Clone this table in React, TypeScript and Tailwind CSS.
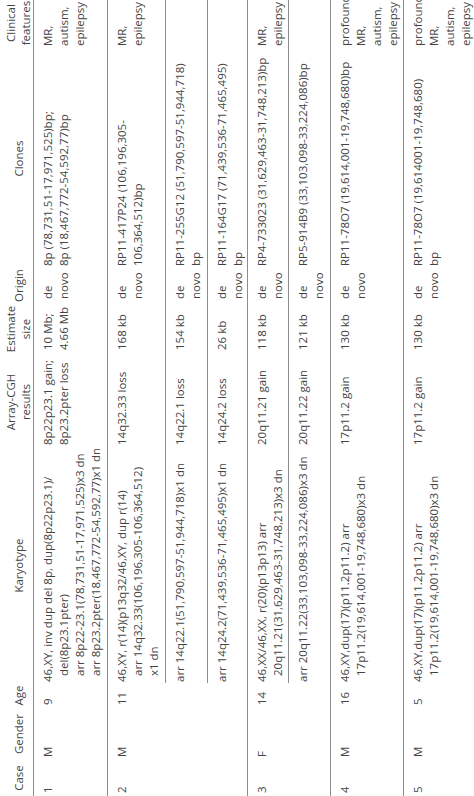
import React from 'react';

type Row = {
  caseNo?: string;
  gender?: string;
  age?: string;
  span?: 'row-span-2' | 'row-span-3';
  karyotype: string[];
  array: string[];
  size: string[];
  origin: string[];
  clones: string[];
  clinical: string[];
};

const rows: Row[] = [
  {
    caseNo: '1',
    gender: 'M',
    age: '9',
    karyotype: [
      '46,XY, inv dup del 8p, dup(8p22p23.1)/',
      'del(8p23.1pter)',
      'arr 8p22-23.1(78,731,51-17,971,525)x3 dn',
      'arr 8p23.2pter(18,467,772-54,592,77)x1 dn',
    ],
    array: ['8p22p23.1 gain;', '8p23.2pter loss'],
    size: ['10 Mb;', '4.66 Mb'],
    origin: ['de', 'novo'],
    clones: ['8p (78,731,51-17,971,525)bp;', '8p (18,467,772-54,592,77)bp'],
    clinical: ['MR,', 'autism,', 'epilepsy'],
  },
  {
    caseNo: '2',
    gender: 'M',
    age: '11',
    span: 'row-span-3',
    karyotype: ['46,XY, r(14)(p13q32/46,XY, dup r(14)', 'arr 14q32.33(106,196,305-106,364,512)', 'x1 dn'],
    array: ['14q32.33 loss'],
    size: ['168 kb'],
    origin: ['de', 'novo'],
    clones: ['RP11-417P24 (106,196,305-', '106,364,512)bp'],
    clinical: ['MR,', 'epilepsy'],
  },
  {
    karyotype: ['arr 14q22.1(51,790,597-51,944,718)x1 dn'],
    array: ['14q22.1 loss'],
    size: ['154 kb'],
    origin: ['de', 'novo'],
    clones: ['RP11-255G12 (51,790,597-51,944,718)', 'bp'],
    clinical: [],
  },
  {
    karyotype: ['arr 14q24.2(71,439,536-71,465,495)x1 dn'],
    array: ['14q24.2 loss'],
    size: ['26 kb'],
    origin: ['de', 'novo'],
    clones: ['RP11-164G17 (71,439,536-71,465,495)', 'bp'],
    clinical: [],
  },
  {
    caseNo: '3',
    gender: 'F',
    age: '14',
    span: 'row-span-2',
    karyotype: ['46,XX/46,XX, r(20)(p13p13) arr', '20q11.21(31,629,463-31,748,213)x3 dn'],
    array: ['20q11.21 gain'],
    size: ['118 kb'],
    origin: ['de', 'novo'],
    clones: ['RP4-733023 (31,629,463-31,748,213)bp'],
    clinical: ['MR,', 'epilepsy'],
  },
  {
    karyotype: ['arr 20q11.22(33,103,098-33,224,086)x3 dn'],
    array: ['20q11.22 gain'],
    size: ['121 kb'],
    origin: ['de', 'novo'],
    clones: ['RP5-914B9 (33,103,098-33,224,086)bp'],
    clinical: [],
  },
  {
    caseNo: '4',
    gender: 'M',
    age: '16',
    karyotype: ['46,XY,dup(17)(p11.2p11.2) arr', '17p11.2(19,614,001-19,748,680)x3 dn'],
    array: ['17p11.2 gain'],
    size: ['130 kb'],
    origin: ['de', 'novo'],
    clones: ['RP11-78O7 (19,614,001-19,748,680)bp'],
    clinical: ['profound', 'MR,', 'autism,', 'epilepsy'],
  },
  {
    caseNo: '5',
    gender: 'M',
    age: '5',
    karyotype: ['46,XY,dup(17)(p11.2p11.2) arr', '17p11.2(19,614,001-19,748,680)x3 dn'],
    array: ['17p11.2 gain'],
    size: ['130 kb'],
    origin: ['de', 'novo'],
    clones: ['RP11-78O7 (19,614001-19,748,680)', 'bp'],
    clinical: ['profound', 'MR,', 'autism,', 'epilepsy'],
  },
];

// rows are drawn upright, then the whole sheet is turned a quarter to the left
const cell = 'border-t border-[#8d8d8d] pt-[6px] leading-[16px] whitespace-nowrap';

const Lines: React.FC<{ items: string[] }> = ({ items }) => (
  <>
    {items.map((t, i) => (
      <React.Fragment key={i}>
        {i > 0 && <br />}
        {t}
      </React.Fragment>
    ))}
  </>
);

const Head: React.FC<{ children: React.ReactNode }> = ({ children }) => (
  <div className="flex items-center justify-center pt-[3px] text-center leading-[15px] whitespace-nowrap">
    {children}
  </div>
);

const App: React.FC = () => {
  return (
    <div className="w-[474px] h-[796px] overflow-hidden bg-white">
      <div className="w-[796px] h-[474px] overflow-hidden origin-top-left translate-y-[796px] -rotate-90">
        <div
          className="grid grid-cols-[36px_52px_25px_235px_92px_54px_33px_221px_50px] grid-rows-[33px_74px_58px_42px_40px_41px_42px_73px_90px] w-[798px] text-[11.5px] text-[#444]"
          style={{ fontFamily: '"Open Sans", Lato, sans-serif' }}
        >
          <Head>Case</Head>
          <Head>Gender</Head>
          <Head>Age</Head>
          <Head>Karyotype</Head>
          <Head>
            Array-CGH
            <br />
            results
          </Head>
          <Head>
            Estimate
            <br />
            size
          </Head>
          <Head>Origin</Head>
          <Head>Clones</Head>
          <Head>
            Clinical
            <br />
            features
          </Head>

          {rows.map((r, i) => (
            <React.Fragment key={i}>
              {r.caseNo && (
                <>
                  <div className={`${cell} ${r.span ?? ''} pl-[3px]`}>{r.caseNo}</div>
                  <div className={`${cell} ${r.span ?? ''} pl-[3px]`}>{r.gender}</div>
                  <div className={`${cell} ${r.span ?? ''} pl-[3px]`}>{r.age}</div>
                </>
              )}
              <div className={`${cell} pl-[7px] -indent-[6px]`}>
                <Lines items={r.karyotype} />
              </div>
              <div className={`${cell} pl-[3px]`}>
                <Lines items={r.array} />
              </div>
              <div className={`${cell} pl-[6px]`}>
                <Lines items={r.size} />
              </div>
              <div className={`${cell} pl-[3px]`}>
                <Lines items={r.origin} />
              </div>
              <div className={`${cell} pl-[3px]`}>
                <Lines items={r.clones} />
              </div>
              <div className={`${cell} pl-[2px]`}>
                <Lines items={r.clinical} />
              </div>
            </React.Fragment>
          ))}
        </div>
      </div>
    </div>
  );
};

export default App;
